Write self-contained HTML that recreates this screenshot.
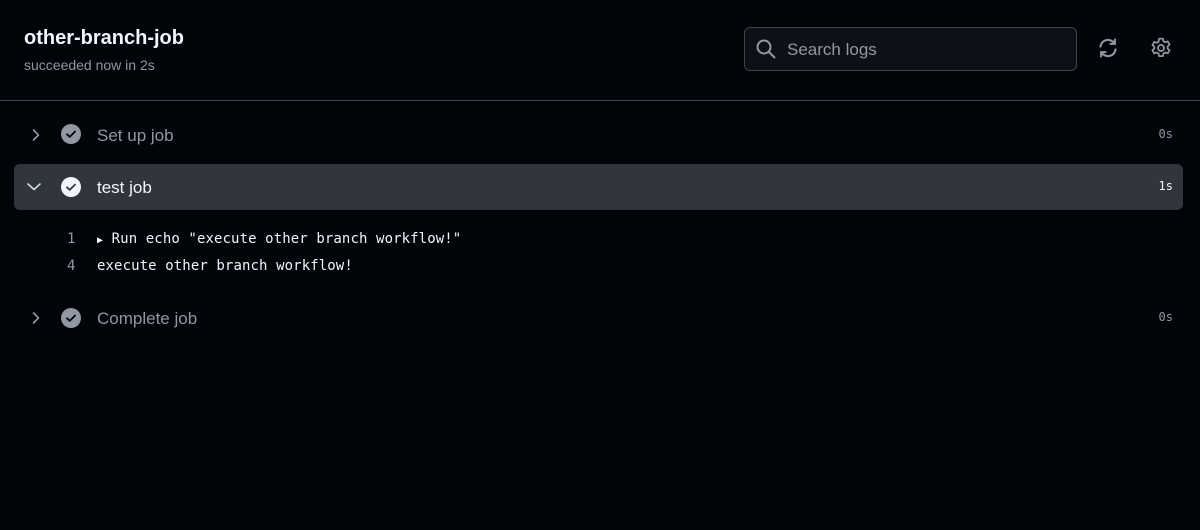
<!DOCTYPE html>
<html><head><style>
*{margin:0;padding:0;box-sizing:border-box}
body{width:1200px;height:530px;background:#010409;font-family:"Liberation Sans",sans-serif;position:relative;overflow:hidden}
.a{position:absolute}
.title{left:24px;top:27px;color:#f0f6fc;font-size:20px;font-weight:bold}
.sub{left:24px;top:57px;color:#9198a1;font-size:14px}
.search{left:744px;top:27px;width:333px;height:44px;border:1px solid #3d444d;border-radius:6px;background:#0d1117}
.search span{position:absolute;left:42px;top:12px;color:#9198a1;font-size:17px}
.hr{left:0;top:100px;width:1200px;height:1px;background:#3d444d}
.row{left:14px;width:1169px;height:46px;border-radius:6px}
.row .lbl{position:absolute;left:83px;top:14px;font-size:17px}
.row .t{position:absolute;right:10px;top:15px;font-family:"DejaVu Sans Mono",monospace;font-size:12px;color:#9198a1}
.mono{font-family:"DejaVu Sans Mono",monospace;font-size:14px;letter-spacing:0.1px;color:#f0f6fc}
.ln{color:#9198a1}
</style></head><body>
<div class="a title">other-branch-job</div>
<div class="a sub">succeeded now in 2s</div>
<div class="a search">
<svg class="a" style="left:11px;top:11px" width="20" height="20" viewBox="0 0 20 20" fill="none" stroke="#9198a1" stroke-width="2"><circle cx="8" cy="8" r="6.5"/><path d="M13 13l5.5 5.5" stroke-linecap="round"/></svg>
<span>Search logs</span></div>
<svg class="a" style="left:1097px;top:37px" width="22" height="22" viewBox="0 0 16 16" fill="none" stroke="#9198a1" stroke-width="1.5" stroke-linecap="round"><path d="M2.5 7A5.5 5.5 0 0 1 12.5 4.5"/><path d="M13.5 9A5.5 5.5 0 0 1 3.5 11.5"/><path d="M13 1.8v3.2h-3.2" fill="none"/><path d="M3 14.2v-3.2h3.2"/></svg>
<svg class="a" style="left:1150px;top:37px" width="22" height="22" viewBox="0 0 20 20" fill="none" stroke="#9198a1" stroke-width="1.6"><path d="M8.3 1.5h3.4l.5 2.4 1.6.9 2.3-.8 1.7 2.9-1.8 1.6v1.9l1.8 1.6-1.7 2.9-2.3-.8-1.6.9-.5 2.4H8.3l-.5-2.4-1.6-.9-2.3.8-1.7-2.9 1.8-1.6V9l-1.8-1.6 1.7-2.9 2.3.8 1.6-.9z" stroke-linejoin="round"/><circle cx="10" cy="10" r="2.8"/></svg>
<div class="a hr"></div>

<div class="a row" style="top:112px">
<svg class="a" style="left:16px;top:16px" width="12" height="14" viewBox="0 0 12 14"><path d="M3.5 2l5 5-5 5" fill="none" stroke="#9198a1" stroke-width="1.6" stroke-linecap="round" stroke-linejoin="round"/></svg>
<svg class="a" style="left:47px;top:12px" width="20" height="20" viewBox="0 0 20 20"><circle cx="10" cy="10" r="10" fill="#9198a1"/><path d="M6 10.3l2.7 2.6L14 7.6" fill="none" stroke="#010409" stroke-width="1.8" stroke-linecap="round" stroke-linejoin="round"/></svg>
<span class="lbl" style="color:#9198a1">Set up job</span><span class="t">0s</span></div>

<div class="a row" style="top:164px;background:#31363d">
<svg class="a" style="left:12px;top:17px" width="16" height="12" viewBox="0 0 16 12"><path d="M2 3l6 5.5L14 3" fill="none" stroke="#d1d7e0" stroke-width="1.6" stroke-linecap="round" stroke-linejoin="round"/></svg>
<svg class="a" style="left:47px;top:13px" width="20" height="20" viewBox="0 0 20 20"><circle cx="10" cy="10" r="10" fill="#f0f6fc"/><path d="M6 10.3l2.7 2.6L14 7.6" fill="none" stroke="#31363d" stroke-width="1.8" stroke-linecap="round" stroke-linejoin="round"/></svg>
<span class="lbl" style="color:#f0f6fc">test job</span><span class="t" style="color:#f0f6fc">1s</span></div>

<div class="a mono" style="left:67px;top:231px"><span class="ln">1</span></div>
<div class="a mono" style="left:97px;top:231px"><span style="font-size:10px">▶</span> Run echo "execute other branch workflow!"</div>
<div class="a mono" style="left:67px;top:258px"><span class="ln">4</span></div>
<div class="a mono" style="left:97px;top:258px">execute other branch workflow!</div>

<div class="a row" style="top:295px">
<svg class="a" style="left:16px;top:16px" width="12" height="14" viewBox="0 0 12 14"><path d="M3.5 2l5 5-5 5" fill="none" stroke="#9198a1" stroke-width="1.6" stroke-linecap="round" stroke-linejoin="round"/></svg>
<svg class="a" style="left:47px;top:13px" width="20" height="20" viewBox="0 0 20 20"><circle cx="10" cy="10" r="10" fill="#9198a1"/><path d="M6 10.3l2.7 2.6L14 7.6" fill="none" stroke="#010409" stroke-width="1.8" stroke-linecap="round" stroke-linejoin="round"/></svg>
<span class="lbl" style="color:#9198a1">Complete job</span><span class="t">0s</span></div>
</body></html>
